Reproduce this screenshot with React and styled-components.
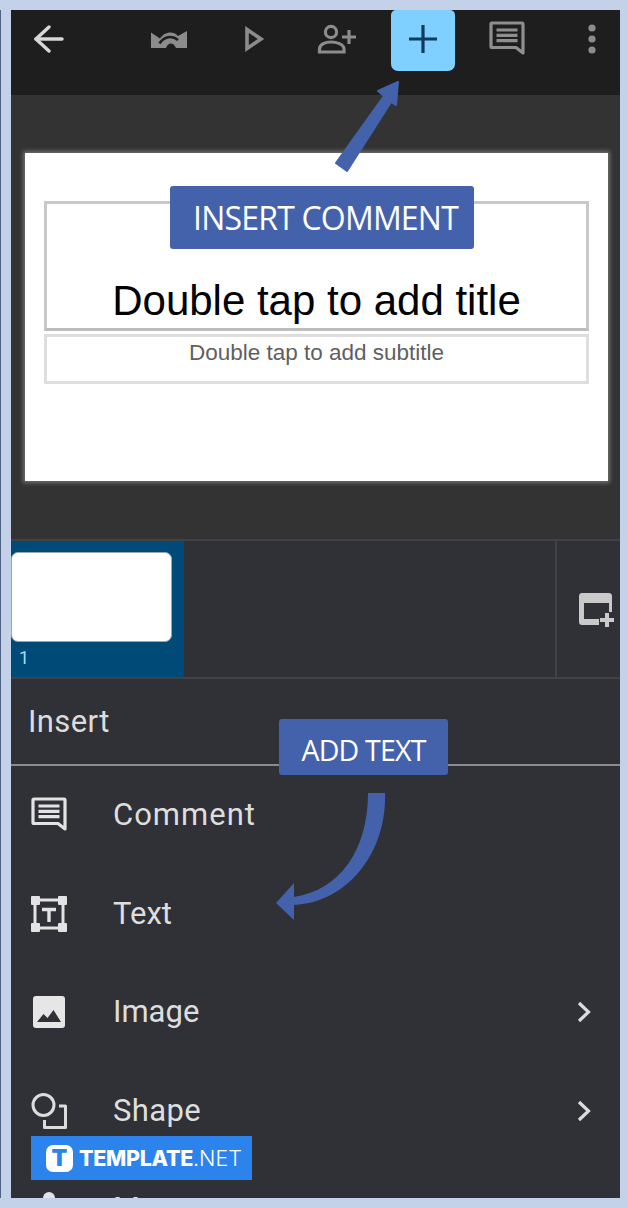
import React from "react";
import styled, { createGlobalStyle } from "styled-components";

const Global = createGlobalStyle`
  html, body { margin: 0; padding: 0; background: #c3d2e8; }
  * { box-sizing: border-box; }
`;

const Frame = styled.div`
  position: relative;
  width: 628px;
  height: 1208px;
  padding: 10px 8px 10px 11px;
  background: #c3d2e8;
  overflow: hidden;
  &::before {
    content: "";
    position: absolute;
    left: 0;
    top: 10px;
    width: 1px;
    height: 1188px;
    background: #4f6285;
  }
`;
const Phone = styled.div`
  width: 609px;
  height: 1188px;
  display: flex;
  flex-direction: column;
  overflow: hidden;
  background: #303136;
  font-family: Roboto, "Liberation Sans", sans-serif;
`;
const Toolbar = styled.header`
  flex: none;
  height: 85px;
  background: #1e1e1e;
  display: flex;
  align-items: flex-start;
`;
const Slot = styled.div`
  flex: none;
  width: ${(p) => p.$w}px;
  margin-left: ${(p) => p.$ml || 0}px;
  height: 58px;
  display: flex;
  align-items: center;
  justify-content: center;
`;
const PlusButton = styled.div`
  flex: none;
  width: 64px;
  height: 61px;
  margin-left: 16px;
  margin-right: -1px;
  padding-bottom: 3px;
  background: #7fcfff;
  border-radius: 5px 5px 7px 7px;
  display: flex;
  align-items: center;
  justify-content: center;
`;
const Canvas = styled.section`
  flex: none;
  height: 444px;
  padding: 58px 12px 0 14px;
  background: #333333;
`;
const Slide = styled.div`
  height: 328px;
  padding: 48px 19px 0;
  background: #fff;
  box-shadow: 0 0 4px 2px #6f6f6f;
`;
const TitleBox = styled.div`
  height: 130px;
  border: 3px solid #c8c8c8;
  border-bottom-color: #bdbdbd;
  display: flex;
  align-items: flex-end;
  justify-content: center;
  font-family: "Liberation Sans", Arial, sans-serif;
  font-size: 42px;
  line-height: 54px;
  color: #000;
  white-space: nowrap;
`;
const SubtitleBox = styled.div`
  height: 50px;
  margin-top: 3px;
  border: 3px solid #dedede;
  padding-top: 2px;
  text-align: center;
  font-family: "Liberation Sans", Arial, sans-serif;
  font-size: 22.5px;
  line-height: 28px;
  color: #5f5f5f;
`;
const Film = styled.section`
  flex: none;
  height: 140px;
  display: flex;
  background: #303136;
  border-top: 2px solid #414245;
  border-bottom: 2px solid #414245;
`;
const ThumbCell = styled.div`
  flex: none;
  width: 173px;
  padding: 11px 12px 0 0;
  background: #004a77;
  display: flex;
  flex-direction: column;
`;
const Thumb = styled.div`
  height: 90px;
  background: #fff;
  border-radius: 7px;
  border: 1px solid #9aa7b0;
`;
const ThumbNumber = styled.span`
  margin: 6px 0 0 8px;
  font-size: 18px;
  line-height: 20px;
  color: #9fdcf5;
`;
const FilmSpacer = styled.div`
  flex: 1;
`;
const AddCell = styled.div`
  flex: none;
  width: 65px;
  border-left: 2px solid #414245;
  padding: 52px 0 0 22px;
`;
const SheetHeader = styled.div`
  flex: none;
  height: 87px;
  padding: 26px 0 0 17px;
  font-size: 31px;
  letter-spacing: 0.4px;
  line-height: 34px;
  color: #dcdcdc;
  border-bottom: 2px solid #8b8b8d;
`;
const Row = styled.div`
  flex: none;
  height: 98.5px;
  padding: 0 29px 0 20px;
  display: flex;
  align-items: center;
`;
const RowIcon = styled.div`
  flex: none;
  width: 36px;
  height: 36px;
  margin-right: 46px;
  display: flex;
  align-items: center;
  justify-content: center;
`;
const RowLabel = styled.span`
  flex: 1;
  font-size: 31px;
  letter-spacing: ${(p) => p.$track || 0}px;
  line-height: 40px;
  color: #dedede;
`;
const Callout = styled.div`
  position: absolute;
  left: ${(p) => p.$x}px;
  top: ${(p) => p.$y}px;
  width: ${(p) => p.$w}px;
  height: ${(p) => p.$h}px;
  padding-left: ${(p) => p.$pl || 0}px;
  padding-top: ${(p) => p.$pt || 0}px;
  background: #4462ab;
  border-radius: 3px;
  display: flex;
  align-items: center;
  justify-content: center;
  color: #fff;
  font-family: "Open Sans", "Liberation Sans", sans-serif;
  font-size: ${(p) => p.$fs}px;
  letter-spacing: -0.8px;
  white-space: nowrap;
`;
const ArrowLayer = styled.svg`
  position: absolute;
  left: 0;
  top: 0;
  pointer-events: none;
`;
const LogoBadge = styled.div`
  position: absolute;
  left: 31px;
  top: 1136px;
  width: 221px;
  height: 44px;
  padding-left: 15px;
  background: #2d83ec;
  display: flex;
  align-items: center;
  color: #fff;
  font-family: Inter, "Open Sans", sans-serif;
  white-space: nowrap;
`;
const LogoMark = styled.span`
  flex: none;
  width: 27px;
  height: 27px;
  margin-right: 6px;
  border-radius: 7px;
  background: #fff;
  color: #2d83ec;
  display: flex;
  align-items: center;
  justify-content: center;
  font-size: 23px;
  font-weight: 900;
`;
const LogoBold = styled.span`
  font-size: 21.5px;
  font-weight: 800;
  letter-spacing: -0.3px;
`;
const LogoThin = styled.span`
  font-size: 21.5px;
  font-weight: 300;
`;

const BackIcon = () => (
  <svg width="30" height="30" viewBox="0 0 30 30" fill="none" stroke="#d8d8d8" strokeWidth="3.4" strokeLinecap="round" strokeLinejoin="round">
    <path d="M2 15H28" />
    <path d="M15 3L2 15L15 27" />
  </svg>
);
const UndoIcon = () => (
  <svg width="36" height="18" viewBox="0 0 36 18" fill="none">
    <path d="M0 2.5L9 8.5C13 2 22 0 27 6L36 1V18H0Z" fill="#8c8c8c" />
    <path d="M8.5 13.5C13 6.5 21 5 27 10" stroke="#1e1e1e" strokeWidth="2.6" />
    <path d="M15 18C17 12.5 22 11.5 25 18Z" fill="#1e1e1e" />
  </svg>
);
const PlayIcon = () => (
  <svg width="20" height="26" viewBox="0 0 20 26" fill="none" stroke="#8c8c8c" strokeWidth="3.6" strokeLinejoin="miter">
    <path d="M2 3.5V22.5L16 13Z" />
  </svg>
);
const PersonIcon = () => (
  <svg width="40" height="30" viewBox="0 0 40 30" fill="none" stroke="#8c8c8c" strokeWidth="3.2">
    <circle cx="14" cy="8" r="5.6" />
    <path d="M2.5 28V25C2.5 20 9 18 14 18C19 18 27 20 27 25V28Z" />
    <path d="M25 13H39M32 6V20" />
  </svg>
);
const PlusIcon = () => (
  <svg width="30" height="30" viewBox="0 0 30 30" stroke="#0c3b60" strokeWidth="3.2">
    <path d="M1 15H29M15 1V29" />
  </svg>
);
const CommentIcon = ({ color }) => (
  <svg width="36" height="36" viewBox="0 0 36 36" fill="none">
    <path d="M3 2H33C33.6 2 34 2.4 34 3V32L27 26.5H3C2.4 26.5 2 26 2 25.5V3C2 2.4 2.4 2 3 2Z" stroke={color} strokeWidth="3.2" strokeLinejoin="round" />
    <path d="M7.5 9H28.5M7.5 14.3H28.5M7.5 19.6H28.5" stroke={color} strokeWidth="3.2" />
  </svg>
);
const MoreIcon = () => (
  <svg width="10" height="30" viewBox="0 0 10 30" fill="#8c8c8c">
    <circle cx="5" cy="4" r="3.6" />
    <circle cx="5" cy="15" r="3.6" />
    <circle cx="5" cy="26" r="3.6" />
  </svg>
);
const AddSlideIcon = () => (
  <svg width="35" height="34" viewBox="0 0 35 34">
    <path d="M3 0H30C31.7 0 33 1.3 33 3V19H30V10H5V26H20V32H3C1.3 32 0 30.7 0 29V3C0 1.3 1.3 0 3 0Z" fill="#c9c9c9" />
    <path d="M21 27H35M28 20V34" stroke="#c9c9c9" strokeWidth="4" />
  </svg>
);
const TextIcon = () => (
  <svg width="36" height="36" viewBox="0 0 36 36" fill="none">
    <rect x="4" y="4" width="28" height="28" stroke="#e3e3e3" strokeWidth="3" />
    <g fill="#e3e3e3">
      <rect x="0" y="0" width="9" height="9" rx="1" />
      <rect x="27" y="0" width="9" height="9" rx="1" />
      <rect x="0" y="27" width="9" height="9" rx="1" />
      <rect x="27" y="27" width="9" height="9" rx="1" />
    </g>
    <path d="M11 13.5H25M18 13.5V26" stroke="#e3e3e3" strokeWidth="3.4" />
  </svg>
);
const ImageIcon = () => (
  <svg width="32" height="32" viewBox="0 0 32 32">
    <rect width="32" height="32" rx="3" fill="#e6e6e6" />
    <path d="M4 26L10.5 18L14.5 22L20.5 14L28 26Z" fill="#303136" />
  </svg>
);
const ShapeIcon = () => (
  <svg width="36" height="36" viewBox="0 0 36 36" fill="none" stroke="#dcdcdc" strokeWidth="3" strokeLinejoin="round">
    <circle cx="12.5" cy="12" r="10.5" />
    <path d="M28 13H34.5V34.5H13.5V27" />
  </svg>
);
const LineIcon = () => (
  <svg width="36" height="36" viewBox="0 0 36 36" fill="#e3e3e3">
    <circle cx="18" cy="7" r="6" />
  </svg>
);
const Chevron = () => (
  <svg width="14" height="22" viewBox="0 0 14 22" fill="none" stroke="#dcdcdc" strokeWidth="3.2">
    <path d="M2 2L11.5 11L2 20" />
  </svg>
);

const rows = [
  { label: "Comment", icon: <CommentIcon color="#e3e3e3" />, track: 1 },
  { label: "Text", icon: <TextIcon /> },
  { label: "Image", icon: <ImageIcon />, more: true },
  { label: "Shape", icon: <ShapeIcon />, more: true, track: 0.4 },
  { label: "Move", icon: <LineIcon /> },
];

export default function App() {
  return (
    <Frame>
      <Global />
      <Phone>
        <Toolbar>
          <Slot $w={76}><BackIcon /></Slot>
          <Slot $w={84} $ml={40}><UndoIcon /></Slot>
          <Slot $w={88}><PlayIcon /></Slot>
          <Slot $w={76}><PersonIcon /></Slot>
          <PlusButton><PlusIcon /></PlusButton>
          <Slot $w={86} $ml={10}><CommentIcon color="#8f8f8f" /></Slot>
          <Slot $w={56} $ml={14}><MoreIcon /></Slot>
        </Toolbar>
        <Canvas>
          <Slide>
            <TitleBox>Double tap to add title</TitleBox>
            <SubtitleBox>Double tap to add subtitle</SubtitleBox>
          </Slide>
        </Canvas>
        <Film>
          <ThumbCell>
            <Thumb />
            <ThumbNumber>1</ThumbNumber>
          </ThumbCell>
          <FilmSpacer />
          <AddCell><AddSlideIcon /></AddCell>
        </Film>
        <SheetHeader>Insert</SheetHeader>
        {rows.map((r) => (
          <Row key={r.label}>
            <RowIcon>{r.icon}</RowIcon>
            <RowLabel $track={r.track}>{r.label}</RowLabel>
            {r.more && <Chevron />}
          </Row>
        ))}
      </Phone>
      <ArrowLayer width="628" height="1208" viewBox="0 0 628 1208">
        <path d="M398 82L378 91L384 96L336 163L347 171L391 102L396 105Z" fill="#4462ab" stroke="#4462ab" strokeWidth="2" strokeLinejoin="round" />
        <path d="M385 793C387 850 350 902 294 905V920L276 903L294 883V897C340 890 368 850 368 793Z" fill="#4462ab" />
      </ArrowLayer>
      <Callout $x={170} $y={186} $w={304} $h={63} $pl={7} $fs={32}>INSERT COMMENT</Callout>
      <Callout $x={279} $y={719} $w={169} $h={56} $pt={5} $fs={28.5}>ADD TEXT</Callout>
      <LogoBadge>
        <LogoMark>T</LogoMark>
        <LogoBold>TEMPLATE</LogoBold>
        <LogoThin>.NET</LogoThin>
      </LogoBadge>
    </Frame>
  );
}
